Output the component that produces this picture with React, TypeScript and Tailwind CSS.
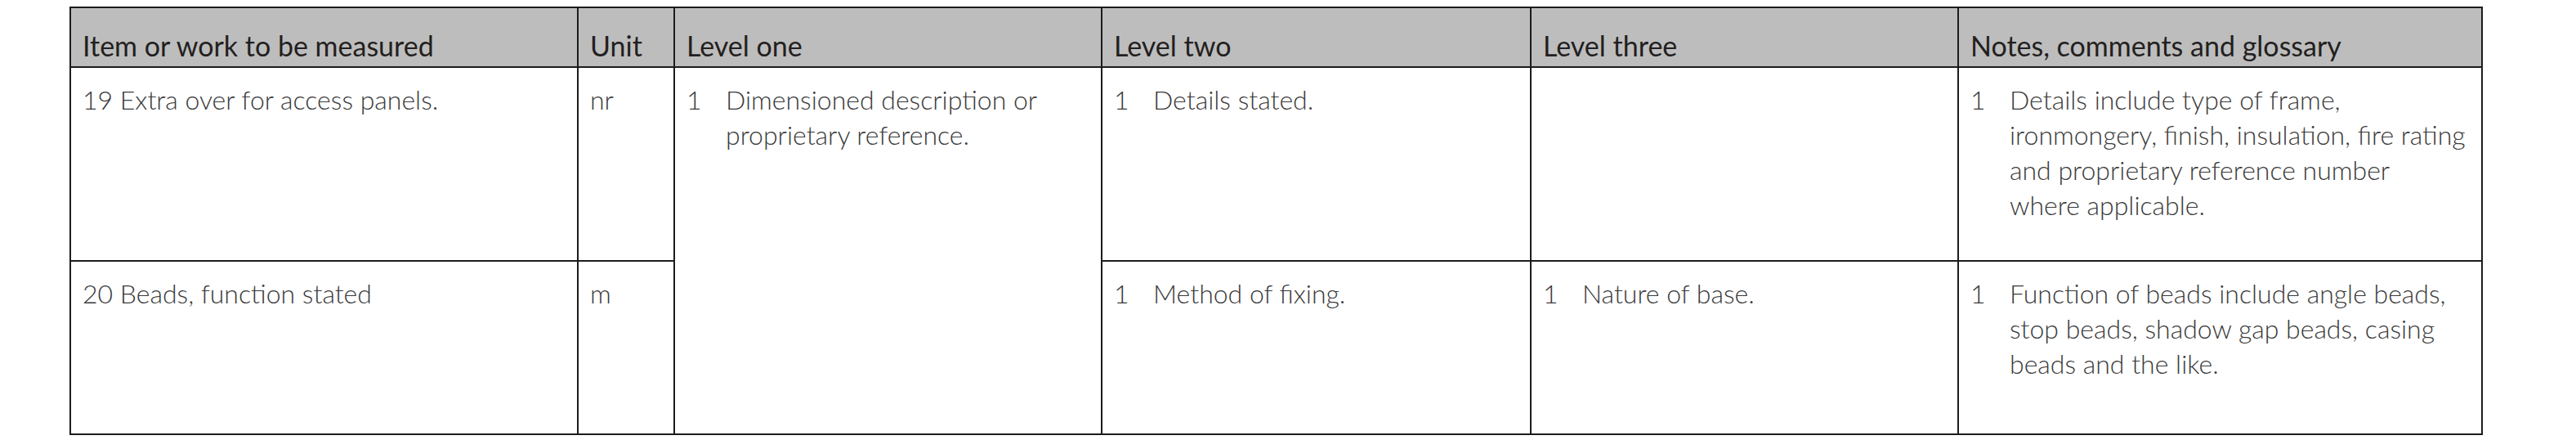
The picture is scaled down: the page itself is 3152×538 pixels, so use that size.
import type { ReactNode } from "react";

const font = { fontFamily: "Lato, 'Open Sans', 'Liberation Sans', sans-serif" };

function Head({ children, last }: { children: ReactNode; last?: boolean }) {
  return (
    <div
      className={`flex items-end bg-[#bdbdbd] pb-[4px] pl-[14px] text-[34px] leading-[43px] text-[#231f20] border-b-2 border-[#1c1c1c] ${last ? "" : "border-r-2"}`}
    >
      {children}
    </div>
  );
}

function Cell({ children, last, bottom, className = "" }: { children?: ReactNode; last?: boolean; bottom?: boolean; className?: string }) {
  return (
    <div
      className={`border-[#1c1c1c] pl-[14px] pr-[12px] pt-[17px] text-[32px] font-light leading-[43px] text-[#3a3a3a] ${last ? "" : "border-r-2"} ${bottom ? "border-b-2" : ""} ${className}`}
    >
      {children}
    </div>
  );
}

function Numbered({ lines }: { lines: string[] }) {
  return (
    <div className="flex">
      <span className="w-[48px] shrink-0">1</span>
      <div>
        {lines.map((l) => (
          <div key={l} className="whitespace-nowrap">{l}</div>
        ))}
      </div>
    </div>
  );
}

export default function App() {
  return (
    <div className="h-[538px] w-[3152px] bg-white pl-[85px] pt-[8px]" style={font}>
      <div className="grid w-[2953px] grid-cols-[621px_118px_523px_525px_523px_639px] grid-rows-[73px_237px_210px] border-2 border-[#1c1c1c]">
        <Head>Item or work to be measured</Head>
        <Head>Unit</Head>
        <Head>Level one</Head>
        <Head>Level two</Head>
        <Head>Level three</Head>
        <Head last>Notes, comments and glossary</Head>

        <Cell bottom>19 Extra over for access panels.</Cell>
        <Cell bottom>nr</Cell>
        <Cell className="row-span-2">
          <Numbered lines={["Dimensioned description or", "proprietary reference."]} />
        </Cell>
        <Cell bottom>
          <Numbered lines={["Details stated."]} />
        </Cell>
        <Cell bottom />
        <Cell bottom last>
          <Numbered
            lines={[
              "Details include type of frame,",
              "ironmongery, finish, insulation, fire rating",
              "and proprietary reference number",
              "where applicable.",
            ]}
          />
        </Cell>

        <Cell className="col-start-1">20 Beads, function stated</Cell>
        <Cell>m</Cell>
        <Cell>
          <Numbered lines={["Method of fixing."]} />
        </Cell>
        <Cell>
          <Numbered lines={["Nature of base."]} />
        </Cell>
        <Cell last>
          <Numbered
            lines={[
              "Function of beads include angle beads,",
              "stop beads, shadow gap beads, casing",
              "beads and the like.",
            ]}
          />
        </Cell>
      </div>
    </div>
  );
}
